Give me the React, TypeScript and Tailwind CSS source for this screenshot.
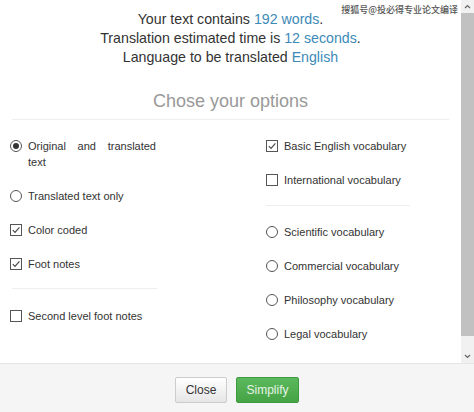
import React from 'react';

type Item = { label: string; kind: 'radio' | 'check'; on?: boolean };

const Radio = ({ on }: { on?: boolean }) => (
  <span className="mt-[2px] flex h-[12px] w-[12px] shrink-0 items-center justify-center rounded-full border border-[#555]">
    {on && <span className="h-[6px] w-[6px] rounded-full bg-[#333]" />}
  </span>
);

const Check = ({ on }: { on?: boolean }) => (
  <span className="mt-[2px] flex h-[12px] w-[12px] shrink-0 items-center justify-center border border-[#555] bg-white">
    {on && (
      <svg width="10" height="10" viewBox="0 0 10 10" fill="none">
        <path d="M1.8 5.2 L4 7.4 L8.4 2.4" stroke="#444" strokeWidth="1.1" />
      </svg>
    )}
  </span>
);

const Row = ({ item, justify }: { item: Item; justify?: boolean }) => (
  <div className="flex gap-[6px] py-[9px] text-[11px] leading-[16px] text-[#333]">
    {item.kind === 'radio' ? <Radio on={item.on} /> : <Check on={item.on} />}
    <span className={justify ? 'w-[128px] text-justify' : ''}>{item.label}</span>
  </div>
);

const Divider = ({ className }: { className: string }) => <div className={`h-px bg-[#eee] ${className}`} />;

export default function App() {
  return (
    <div className="relative flex h-[412px] w-[474px] flex-col bg-white font-['Liberation_Sans',Arial,sans-serif]">
      <div className="flex h-[363px]">
        <div className="flex-1">
          <div className="pt-[10px] text-center text-[14.2px] leading-[19px] text-[#333]">
            <p>
              Your text contains <span className="text-[#3d8ab8]">192 words</span>.
            </p>
            <p>
              Translation estimated time is <span className="text-[#3d8ab8]">12 seconds</span>.
            </p>
            <p>
              Language to be translated <span className="text-[#3d8ab8]">English</span>
            </p>
          </div>
          <h2 className="mt-[22px] text-center text-[18px] leading-[24px] text-[#999]">Chose your options</h2>
          <Divider className="mx-[12px] mt-[6px]" />

          <div className="mt-[9px] flex pl-[10px]">
            <div className="w-[147px]">
              <Row item={{ label: 'Original and translated text', kind: 'radio', on: true }} justify />
              <Row item={{ label: 'Translated text only', kind: 'radio' }} />
              <Row item={{ label: 'Color coded', kind: 'check', on: true }} />
              <Row item={{ label: 'Foot notes', kind: 'check', on: true }} />
              <Divider className="mb-[10px] ml-[2px] mt-[7px]" />
              <Row item={{ label: 'Second level foot notes', kind: 'check' }} />
            </div>
            <div className="ml-[109px] w-[144px]">
              <Row item={{ label: 'Basic English vocabulary', kind: 'check', on: true }} />
              <Row item={{ label: 'International vocabulary', kind: 'check' }} />
              <Divider className="mb-[9px] mt-[8px]" />
              <Row item={{ label: 'Scientific vocabulary', kind: 'radio' }} />
              <Row item={{ label: 'Commercial vocabulary', kind: 'radio' }} />
              <Row item={{ label: 'Philosophy vocabulary', kind: 'radio' }} />
              <Row item={{ label: 'Legal vocabulary', kind: 'radio' }} />
            </div>
          </div>
        </div>

        {/* scrollbar */}
        <div className="flex w-[13px] flex-col bg-[#f1f1f1]">
          <div className="flex h-[13px] items-center justify-center">
            <svg width="7" height="5" viewBox="0 0 7 5">
              <path d="M1 4 L3.5 1.5 L6 4" stroke="#666" strokeWidth="1.2" fill="none" />
            </svg>
          </div>
          <div className="h-[323px] bg-[#c1c1c1]" />
          <div className="flex-1" />
          <div className="flex h-[13px] items-center justify-center">
            <svg width="7" height="5" viewBox="0 0 7 5">
              <path d="M1 1 L3.5 3.5 L6 1" stroke="#666" strokeWidth="1.2" fill="none" />
            </svg>
          </div>
        </div>
      </div>

      <div className="flex flex-1 items-center justify-center gap-[9px] border-t border-[#e5e5e5] bg-[#f5f5f5] pt-[3px]">
        <button className="h-[26px] w-[52px] rounded-[2px] border border-[#ccc] bg-gradient-to-b from-white to-[#e6e6e6] text-[12px] text-[#333]">
          Close
        </button>
        <button className="h-[26px] w-[63px] rounded-[2px] border border-[#3e9a3e] bg-gradient-to-b from-[#5cb85c] to-[#45a345] text-[12px] text-[#e6f4e6]">
          Simplify
        </button>
      </div>

      <div className="absolute right-[16px] top-[3px] font-['Noto_Sans_CJK_SC',sans-serif] text-[9px] font-medium leading-[14px] text-[#555]">
        搜狐号@投必得专业论文编译
      </div>
    </div>
  );
}
